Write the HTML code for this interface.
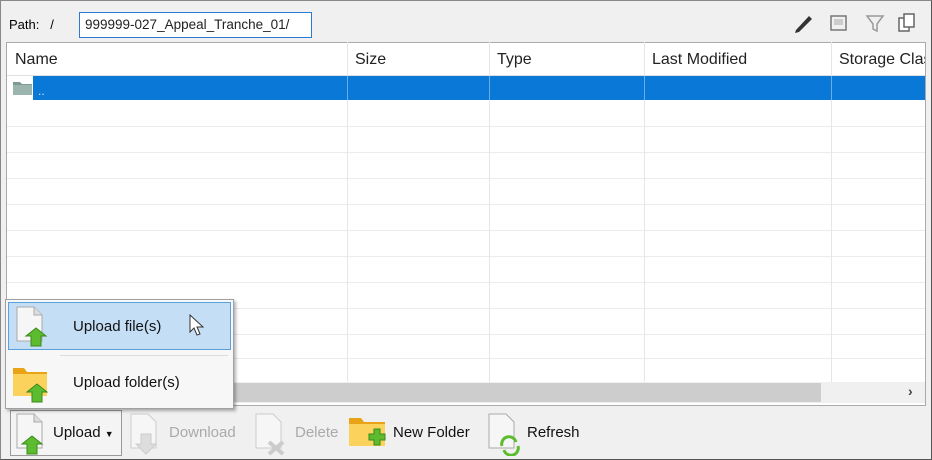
<!DOCTYPE html>
<html><head><style>
*{margin:0;padding:0;box-sizing:border-box}
body{width:932px;height:460px;overflow:hidden;background:#f0f0f0;font-family:"Liberation Sans",sans-serif;position:relative}
.outer{position:absolute;left:0;top:0;width:932px;height:460px;border:1px solid #555;border-top-color:#888;border-left-color:#888}
.abs{position:absolute}
.t{font-size:13px;color:#000;white-space:nowrap}
.hdr{font-size:16px;color:#222;white-space:nowrap}
.vl{position:absolute;top:42px;width:1px;height:340px;background:#e6e6e6}
.hl{position:absolute;left:7px;width:918px;height:1px;background:#ececec}
</style></head><body>
<div class="outer"></div>
<div class="abs t" style="left:9px;top:17px;font-size:13px">Path:&nbsp;&nbsp;&nbsp;/</div>
<div class="abs" style="left:79px;top:12px;width:233px;height:26px;border:1px solid #2a7ad5;background:#fff"></div>
<div class="abs t" style="left:85px;top:17px;font-size:13.5px;color:#222">999999-027_Appeal_Tranche_01/</div>
<svg class="abs" style="left:790px;top:10px" width="140" height="26">
<path d="M6 20 L19 6 L22 9 L9 22 L5 23Z" fill="#333"/>
<rect x="41" y="6" width="15" height="14" fill="none" stroke="#777" stroke-width="1.5"/><rect x="44" y="9" width="9" height="6" fill="#ccc"/>
<path d="M77 6 L93 6 L87 14 L87 21 L83 19 L83 14Z" fill="none" stroke="#999" stroke-width="1.5"/>
<rect x="109" y="8" width="10" height="13" fill="#fff" stroke="#666" stroke-width="1.5"/><rect x="114" y="4" width="10" height="13" fill="#fff" stroke="#666" stroke-width="1.5"/>
</svg>
<div class="abs" style="left:6px;top:42px;width:920px;height:364px;background:#fff;border:1px solid #aaa"></div>
<div class="abs" style="left:7px;top:43px;width:918px;height:33px;background:#fff;border-bottom:1px solid #e0e0e0"></div>
<div class="hl" style="top:126px"></div><div class="hl" style="top:152px"></div><div class="hl" style="top:178px"></div><div class="hl" style="top:204px"></div><div class="hl" style="top:230px"></div><div class="hl" style="top:256px"></div><div class="hl" style="top:282px"></div><div class="hl" style="top:308px"></div><div class="hl" style="top:334px"></div><div class="hl" style="top:358px"></div>
<div class="vl" style="left:347px"></div><div class="vl" style="left:489px"></div><div class="vl" style="left:644px"></div><div class="vl" style="left:831px"></div>
<div class="abs hdr" style="left:15px;top:51px">Name</div>
<div class="abs hdr" style="left:355px;top:51px">Size</div>
<div class="abs hdr" style="left:497px;top:51px">Type</div>
<div class="abs hdr" style="left:652px;top:51px">Last Modified</div>
<div class="abs hdr" style="left:839px;top:51px;width:86px;overflow:hidden">Storage Class</div>
<div class="abs" style="left:33px;top:76px;width:892px;height:24px;background:#0a78d6"></div>
<div class="abs" style="left:347px;top:76px;width:1px;height:24px;background:#6aaee8"></div><div class="abs" style="left:489px;top:76px;width:1px;height:24px;background:#6aaee8"></div><div class="abs" style="left:644px;top:76px;width:1px;height:24px;background:#6aaee8"></div><div class="abs" style="left:831px;top:76px;width:1px;height:24px;background:#6aaee8"></div>
<svg class="abs" style="left:12px;top:79px" width="22" height="18"><path d="M1 3 H8 L10 5 H20 V16 H1Z" fill="#7d9a95"/><rect x="1" y="6" width="19" height="10" fill="#9bb5ae"/></svg>
<div class="abs" style="left:38px;top:84px;color:#cfe3f7;font-size:12px">..</div>
<div class="abs" style="left:7px;top:382px;width:918px;height:21px;background:#f0f0f0"></div>
<div class="abs" style="left:7px;top:383px;width:814px;height:19px;background:#cdcdcd"></div>
<div class="abs" style="left:908px;top:383px;font-size:14px;font-weight:bold;color:#444">›</div>
<div class="abs" style="left:10px;top:410px;width:112px;height:46px;border:1px solid #9a9a9a;background:#f4f4f4"></div>
<svg class="abs" style="left:14px;top:412px" width="40" height="44"><path d="M3 2 H20 L28 10 V36 H3Z" fill="#f6f6f6" stroke="#aaa"/><path d="M20 2 V10 H28" fill="#ddd" stroke="#aaa"/><path d="M18 24 L28 32 H23 V42 H13 V32 H8Z" fill="#5dbb2f" stroke="#3a8a1a"/></svg>
<div class="abs" style="left:53px;top:424px;font-size:15px;color:#111">Upload <span style="font-size:9px">▼</span></div>
<svg class="abs" style="left:128px;top:412px" width="34" height="44"><path d="M3 2 H20 L28 10 V36 H3Z" fill="#f6f6f6" stroke="#ccc"/><path d="M18 42 L28 32 H23 V22 H13 V32 H8Z" fill="#ddd" stroke="#ccc"/></svg>
<div class="abs" style="left:169px;top:424px;font-size:15px;color:#aaa">Download</div>
<svg class="abs" style="left:253px;top:412px" width="40" height="44"><path d="M3 2 H20 L28 10 V36 H3Z" fill="#f6f6f6" stroke="#ccc"/><path d="M16 30 L30 42 M30 30 L16 42" stroke="#ccc" stroke-width="4"/></svg>
<div class="abs" style="left:295px;top:424px;font-size:15px;color:#aaa">Delete</div>
<svg class="abs" style="left:347px;top:414px" width="46" height="40"><path d="M2 4 H14 L17 8 H38 V32 H2Z" fill="#e8a317"/><rect x="2" y="10" width="36" height="22" fill="#fbd25c"/><path d="M22 20 h5 v-5 h6 v5 h5 v6 h-5 v5 h-6 v-5 h-5Z" fill="#5dbb2f" stroke="#3a8a1a"/></svg>
<div class="abs" style="left:393px;top:424px;font-size:15px;color:#111">New Folder</div>
<svg class="abs" style="left:486px;top:412px" width="40" height="44"><path d="M3 2 H20 L28 10 V36 H3Z" fill="#f6f6f6" stroke="#aaa"/><path d="M16 34 A7 7 0 0 1 30 30 M32 34 A7 7 0 0 1 18 38" fill="none" stroke="#5dbb2f" stroke-width="3"/></svg>
<div class="abs" style="left:527px;top:424px;font-size:15px;color:#111">Refresh</div>
<div class="abs" style="left:5px;top:299px;width:229px;height:110px;background:#f7f7f7;border:1px solid #a0a0a0;box-shadow:2px 2px 3px rgba(0,0,0,.3)"></div>
<div class="abs" style="left:8px;top:302px;width:223px;height:48px;background:#c4def5;border:1px solid #5aa0dc"></div>
<div class="abs" style="left:60px;top:355px;width:168px;height:1px;background:#ddd"></div>
<svg class="abs" style="left:14px;top:305px" width="40" height="44"><path d="M3 2 H20 L28 10 V36 H3Z" fill="#f6f6f6" stroke="#aaa"/><path d="M20 2 V10 H28" fill="#ddd" stroke="#aaa"/><path d="M22 23 L32 31 H27 V41 H17 V31 H12Z" fill="#5dbb2f" stroke="#3a8a1a"/></svg>
<div class="abs" style="left:73px;top:318px;font-size:15px;color:#111">Upload file(s)</div>
<svg class="abs" style="left:188px;top:313px" width="18" height="24"><path d="M2 2 V19 L6 15 L9 22 L12 21 L9 14 H15Z" fill="#fff" stroke="#333"/></svg>
<svg class="abs" style="left:11px;top:364px" width="44" height="42"><path d="M2 4 H13 L16 8 H36 V32 H2Z" fill="#e8a317"/><rect x="2" y="10" width="34" height="22" fill="#fbd25c"/><path d="M26 20 L36 28 H31 V38 H21 V28 H16Z" fill="#5dbb2f" stroke="#3a8a1a"/></svg>
<div class="abs" style="left:73px;top:374px;font-size:15px;color:#111">Upload folder(s)</div>
</body></html>
